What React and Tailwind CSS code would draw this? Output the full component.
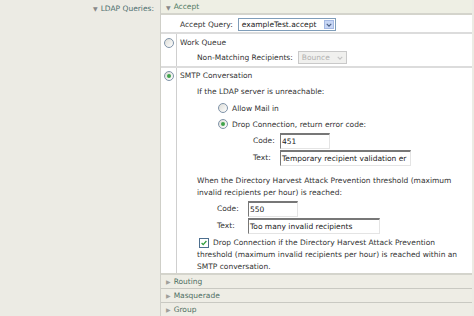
import React from 'react'

const font = { fontFamily: '"DejaVu Sans", Verdana, sans-serif' }

function Radio({ checked }) {
  return (
    <span className="shrink-0 inline-flex items-center justify-center w-[10px] h-[10px] rounded-full border border-[#7f93a8] bg-gradient-to-br from-[#dcdcd6] to-white">
      {checked && <span className="w-[4px] h-[4px] rounded-full bg-[#3fa34a]" />}
    </span>
  )
}

function Checkbox() {
  return (
    <span className="shrink-0 inline-flex items-center justify-center w-[10px] h-[10px] border border-[#4d6f8f] bg-white">
      <svg viewBox="0 0 10 10" className="w-[8px] h-[8px]">
        <path d="M2 5 L4 7 L8 2.5" fill="none" stroke="#2e9d3b" strokeWidth="1.6" />
      </svg>
    </span>
  )
}

function TextInput({ value, w }) {
  return (
    <div
      className={`${w} h-[16px] bg-white border-t-2 border-l border-t-[#777] border-l-[#777] border-r border-b border-r-[#e4e4e4] border-b-[#e4e4e4] pl-[1px] leading-[13px] overflow-hidden whitespace-nowrap text-[#222]`}
    >
      {value}
    </div>
  )
}

function Chevron({ color }) {
  return (
    <svg viewBox="0 0 8 8" className="w-[6px] h-[6px]">
      <path d="M1 2.5 L4 5.5 L7 2.5" fill="none" stroke={color} strokeWidth="1.6" />
    </svg>
  )
}

function Section({ label }) {
  return (
    <div className="shrink-0 h-[14px] flex items-center pl-[5px] bg-[#eeede5] border-b border-[#c9c9c2] text-[#4f6f63]">
      <span className="text-[6px] text-[#a0a09a] mr-[3px]">▶</span>
      {label}
    </div>
  )
}

export default function App() {
  return (
    <div className="w-[474px] h-[316px] flex bg-[#ecebe4] text-[7.5px] text-[#333] overflow-hidden" style={font}>
      {/* left label column */}
      <div className="w-[160px] shrink-0 flex justify-end pr-[6px] pt-[3px] text-[#4f6f6f]">
        <span>
          <span className="text-[6px] text-[#888] mr-[3px]">▼</span>LDAP Queries:
        </span>
      </div>

      {/* right panel */}
      <div className="w-[312px] shrink-0 flex flex-col border-l border-[#cfcfc8]">
        <div className="shrink-0 h-[15px] flex items-center pl-[5px] pt-[1px] bg-[#eeefe4] border-b-2 border-[#d4d4cc] text-[#4f7a63]">
          <span className="text-[6px] text-[#888] mr-[3px]">▼</span>Accept
        </div>

        <div className="shrink-0 bg-white flex flex-col">
          {/* accept query */}
          <div className="shrink-0 h-[19px] flex items-center pl-[19px] pt-[2px] gap-[5px] border-b-2 border-[#dcdcdc]">
            <span>Accept Query:</span>
            <div className="w-[98px] h-[13px] flex items-center justify-between border border-[#7f9db9] pl-[3px] pr-[1px] text-[#222]">
              <span>exampleTest.accept</span>
              <span className="w-[10px] h-[9px] flex items-center justify-center bg-[#c7d6f5] border border-[#a5b9e3]">
                <Chevron color="#4d6185" />
              </span>
            </div>
          </div>

          {/* work queue */}
          <div className="shrink-0 h-[34px] flex border-b-2 border-[#dcdcdc]">
            <div className="w-[16px] border-r border-[#cfcfcf] flex justify-center pt-[4px]">
              <Radio />
            </div>
            <div className="flex-1 pl-[3px] pt-[3px] flex flex-col">
              <span>Work Queue</span>
              <div className="flex items-center gap-[5px] pl-[17px] mt-[3px]">
                <span>Non-Matching Recipients:</span>
                <div className="w-[49px] h-[13px] flex items-center justify-between border border-[#c9c9c9] bg-[#f0f0ee] pl-[3px] pr-[1px] text-[#b0b0b0]">
                  <span>Bounce</span>
                  <span className="w-[9px] h-[9px] flex items-center justify-center">
                    <Chevron color="#c4c4c4" />
                  </span>
                </div>
              </div>
            </div>
          </div>

          {/* smtp conversation */}
          <div className="shrink-0 h-[205px] flex">
            <div className="w-[16px] border-r border-[#cfcfcf] flex justify-center pt-[3px]">
              <Radio checked />
            </div>
            <div className="flex-1 pl-[3px] pt-[2px] flex flex-col">
              <span>SMTP Conversation</span>
              <div className="pl-[17px] mt-[5px] flex flex-col">
                <span>If the LDAP server is unreachable:</span>
                <div className="pl-[21px] mt-[5px] flex flex-col gap-[5px]">
                  <div className="flex items-center gap-[4px]">
                    <Radio />
                    <span>Allow Mail in</span>
                  </div>
                  <div className="flex items-center gap-[4px]">
                    <Radio checked />
                    <span>Drop Connection, return error code:</span>
                  </div>
                </div>
                <div className="pl-[56px] mt-[3px] grid grid-cols-[27px_auto] gap-y-[1px] items-center">
                  <span>Code:</span>
                  <TextInput value="451" w="w-[50px]" />
                  <span>Text:</span>
                  <TextInput value="Temporary recipient validation er" w="w-[131px]" />
                </div>
                <p className="mt-[9px] leading-[12px]">
                  When the Directory Harvest Attack Prevention threshold (maximum
                  <br />
                  invalid recipients per hour) is reached:
                </p>
                <div className="pl-[20px] mt-[2px] grid grid-cols-[31px_auto] gap-y-[1px] items-center">
                  <span>Code:</span>
                  <TextInput value="550" w="w-[50px]" />
                  <span>Text:</span>
                  <TextInput value="Too many invalid recipients" w="w-[132px]" />
                </div>
                <div className="mt-[3px] leading-[12px] flex flex-col">
                  <div className="flex items-center gap-[4px] pl-[2px]">
                    <Checkbox />
                    <span>Drop Connection if the Directory Harvest Attack Prevention</span>
                  </div>
                  <span>threshold (maximum invalid recipients per hour) is reached within an</span>
                  <span>SMTP conversation.</span>
                </div>
              </div>
            </div>
          </div>
        </div>

        <div className="shrink-0 border-t-2 border-[#d4d4cc]">
          <Section label="Routing" />
          <Section label="Masquerade" />
          <Section label="Group" />
        </div>
      </div>
    </div>
  )
}
